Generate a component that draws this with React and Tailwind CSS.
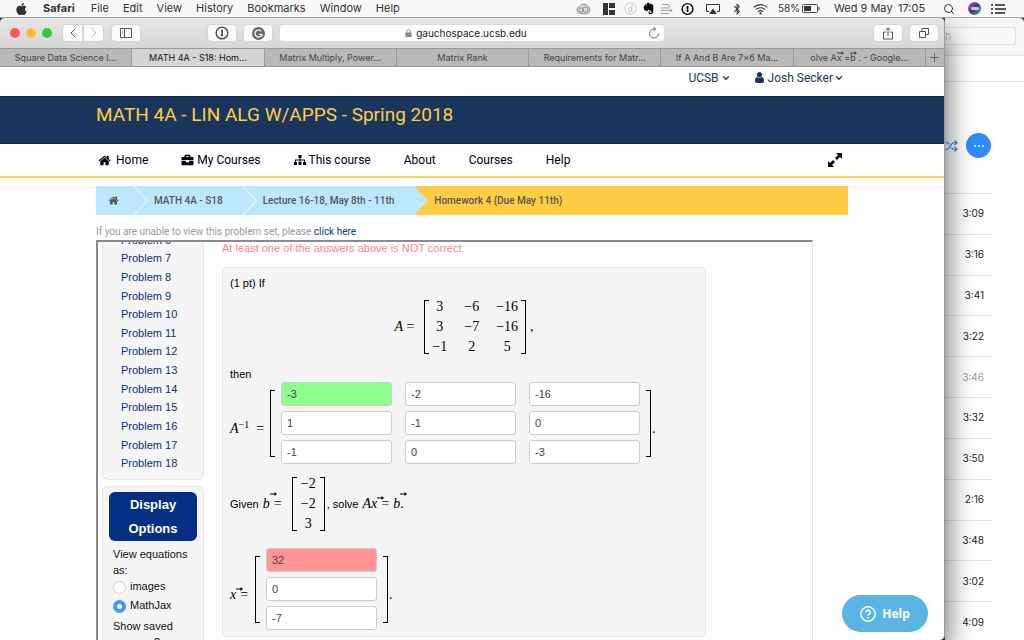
import { FaApple, FaBluetoothB, FaBriefcase, FaEvernote } from "react-icons/fa";
import { ChevronDown, ChevronLeft, ChevronRight, Search, Shuffle } from "lucide-react";

const menus = ["File", "Edit", "View", "History", "Bookmarks", "Window", "Help"];

const problems = [6, 7, 8, 9, 10, 11, 12, 13, 14, 15, 16, 17, 18];

const songs = ["3:09", "3:16", "3:41", "3:22", "3:46", "3:32", "3:50", "2:16", "3:48", "3:02", "4:09"];

const inverse = [
  ["-3", "-2", "-16"],
  ["1", "-1", "0"],
  ["-1", "0", "-3"],
];

const Arrow = ({ className }) => (
  <svg viewBox="0 0 7 4" fill="currentColor" className={`absolute h-1 w-[7px] ${className}`}>
    <path d="M0 1.500h5v1H0zM4.500 0L7 2 4.500 4z" />
  </svg>
);

const TabVec = ({ children }) => (
  <span className="relative">
    {children}
    <Arrow className="-top-px left-0" />
  </span>
);

const tabs = [
  "Square Data Science I...",
  "MATH 4A - S18: Hom...",
  "Matrix Multiply, Power...",
  "Matrix Rank",
  "Requirements for Matr...",
  "If A And B Are 7x6 Ma...",
  <>
    olve A<TabVec>x</TabVec> =<TabVec>b</TabVec> . - Google...
  </>,
];

const HomeIcon = ({ className }) => (
  <svg viewBox="0 0 1792 1792" fill="currentColor" className={className}>
    <path d="M1472 992v480q0 26-19 45t-45 19h-384v-384h-256v384h-384q-26 0-45-19t-19-45v-480q0-1 .5-3t.5-3l575-474 575 474q1 2 1 6zm223-69l-62 74q-8 9-21 11h-3q-13 0-21-7l-692-577-692 577q-12 8-24 7-13-2-21-11l-62-74q-8-10-7-23.5t11-21.5l719-599q32-26 76-26t76 26l244 204v-195q0-14 9-23t23-9h192q14 0 23 9t9 23v408l219 182q10 8 11 21.5t-7 23.5z" />
  </svg>
);

const UserIcon = () => (
  <svg viewBox="256 128 1280 1536" fill="currentColor" className="h-[11px] w-[9px]">
    <path d="M1536 1399q0 109-62.5 187t-150.5 78h-854q-88 0-150.5-78t-62.5-187q0-85 8.5-160.5t31.5-152 58.5-131 94-89 134.5-34.5q131 128 313 128t313-128q76 0 134.5 34.5t94 89 58.5 131 31.5 152 8.5 160.5zm-256-887q0 159-112.5 271.5t-271.5 112.5-271.5-112.5-112.5-271.5 112.5-271.5 271.5-112.5 271.5 112.5 112.5 271.5z" />
  </svg>
);

const SitemapIcon = () => (
  <svg viewBox="0 0 12 12" fill="currentColor" className="h-3 w-3">
    <path d="M4.500 1h3v3H6.500v1.500H11V8h1v3H9V8h1V6.500H6.500V8h1v3h-3V8h1V6.500H2V8h1v3H0V8h1V5.500h4.500V4h-1z" />
  </svg>
);

const ExpandIcon = () => (
  <svg viewBox="0 0 14 14" fill="currentColor" className="h-3.5 w-3.5">
    <path d="M8 0h6v6l-2-2-3 3-2-2 3-3zM6 14H0V8l2 2 3-3 2 2-3 3z" />
  </svg>
);

const KeyholeIcon = ({ className }) => (
  <svg viewBox="0 0 14 14" className={className}>
    <circle cx="7" cy="7" r="5.8" fill="none" stroke="currentColor" strokeWidth="1.5" />
    <path d="M6 3.8h2v2.400l-.5.7.5.6v2.700H6V7.800l.5-.7L6 6.400z" fill="currentColor" />
  </svg>
);

const MenuBar = () => (
  <header className="relative z-20 flex h-[18px] shrink-0 items-center justify-between border-b border-[#a9a3a8] bg-[#f8f8f8] pl-4 pr-[18px] font-['Inter',sans-serif] text-[11px] text-[#333]">
    <nav className="flex items-center gap-4">
      <FaApple className="h-3.5 w-[11px]" />
      <span className="font-bold">Safari</span>
      <div className="flex gap-3.5">
        {menus.map((m) => (
          <span key={m}>{m}</span>
        ))}
      </div>
    </nav>
    <div className="flex items-center">
      <svg viewBox="0 0 16 12" className="mr-3 h-3 w-[15px]" fill="none" stroke="#888">
        <path d="M4.500 11A4 4 0 0 1 4 3.200 5 5 0 0 1 12.500 3 4.200 4.200 0 0 1 11.500 11z" fill="#ddd" />
        <circle cx="5.500" cy="7" r="2.300" />
        <circle cx="10" cy="6.500" r="2.800" />
      </svg>
      <svg viewBox="0 0 12 12" className="mr-[9px] h-3 w-3" fill="#333">
        <path d="M0 0h5v12H0zM6 0h6v5H6zM6 7h6v5H6z" />
      </svg>
      <svg viewBox="0 0 14 14" className="mr-[5px] h-[13px] w-[13px]" fill="none" stroke="#c4c4c4">
        <circle cx="7" cy="7" r="6" />
        <circle cx="6.500" cy="8" r="2" />
        <path d="M8.500 3v7" />
      </svg>
      <FaEvernote className="mr-1.5 h-[13px] w-[13px] text-black" />
      <svg viewBox="0 0 12 12" className="mr-2 h-3 w-3" fill="none" stroke="#999">
        <path d="M1 1.500h6l2 3M0 5h8M0 7.500h11M0 10.500h8M9 5.500l2 2-2 2" />
      </svg>
      <KeyholeIcon className="mr-3 h-[14px] w-[13px] text-black" />
      <svg viewBox="0 0 14 12" className="mr-[13px] h-3 w-3.5">
        <path d="M3 8.500H.5v-7h13v7H11" fill="none" stroke="#333" />
        <path d="M7 5.500l4 5.500H3z" fill="#333" />
      </svg>
      <FaBluetoothB className="mr-3 h-3 w-2" />
      <svg viewBox="0 0 16 12" className="mr-2.5 h-3 w-[15px]" fill="none" stroke="#333" strokeWidth="1.200">
        <path d="M1 4.200a10 10 0 0 1 14 0M3.200 6.600a7 7 0 0 1 9.600 0M5.400 8.900a4 4 0 0 1 5.200 0" />
        <circle cx="8" cy="10.700" r=".6" fill="#333" />
      </svg>
      <span className="w-6 text-[10px]">58%</span>
      <svg viewBox="0 0 18 9" className="mr-3.5 h-[9px] w-[18px]">
        <rect x=".5" y=".5" width="15" height="8" rx="1" fill="none" stroke="#444" />
        <path d="M2 2h7v5H2zM16.500 3h1v3h-1z" fill="#333" />
      </svg>
      <span className="w-16 whitespace-nowrap">Wed 9 May</span>
      <span className="w-[45px]">17:05</span>
      <Search className="mr-[13px] h-3 w-3" />
      <span className="mr-2.5 flex h-[13px] w-[13px] items-center justify-center rounded-full bg-linear-to-br from-[#d84f9b] via-[#3b3a78] to-[#2fb5e0]">
        <span className="h-[3px] w-2 rounded-full bg-white/70" />
      </span>
      <svg viewBox="0 0 15 10" className="h-2.5 w-[15px]" stroke="#222" strokeWidth="1.500">
        <path d="M0 1h2M4 1h10M0 5h2M4 5h11M0 9h2M4 9h10" />
      </svg>
    </div>
  </header>
);

const ToolButton = ({ label, className = "w-[30px] rounded", children }) => (
  <button
    aria-label={label}
    className={`flex h-[18px] items-center justify-center border border-[#d4d4d4] bg-[#fbfbfb] text-[#555] ${className}`}
  >
    {children}
  </button>
);

const Toolbar = () => (
  <div className="grid h-[30px] shrink-0 grid-cols-[279px_1fr_279px] items-center bg-linear-to-b from-[#e6e6e6] to-[#d6d6d6]">
    <div className="flex items-center pl-2.5">
      <div className="mr-2.5 flex gap-1.5">
        <span className="h-2.5 w-2.5 rounded-full bg-[#fc5b57]" />
        <span className="h-2.5 w-2.5 rounded-full bg-[#fdbc40]" />
        <span className="h-2.5 w-2.5 rounded-full bg-[#34c648]" />
      </div>
      <ToolButton label="Back" className="w-[21px] rounded-l">
        <ChevronLeft className="h-4 w-4" strokeWidth={1.5} />
      </ToolButton>
      <ToolButton label="Forward" className="mr-[7px] w-[21px] rounded-r">
        <ChevronRight className="h-4 w-4 text-[#bbb]" strokeWidth={1.5} />
      </ToolButton>
      <ToolButton label="Sidebar">
        <svg viewBox="0 0 12 10" className="h-2.5 w-3" fill="none" stroke="currentColor">
          <path d="M.5.5h11v9H.5zM4.500.5v9M2 3h1M2 5h1" />
        </svg>
      </ToolButton>
      <div className="ml-auto flex gap-1.5 pr-1.5">
        <ToolButton label="1Password">
          <KeyholeIcon className="h-3.5 w-3.5" />
        </ToolButton>
        <ToolButton label="Grammarly">
          <svg viewBox="0 0 14 14" className="h-[13px] w-[13px]">
            <circle cx="7" cy="7" r="7" fill="#666" />
            <path d="M10 4.600A3.800 3.800 0 1 0 10.700 8H7.500M10.700 8v2.200" fill="none" stroke="#fff" strokeWidth="1.300" />
          </svg>
        </ToolButton>
      </div>
    </div>
    <div className="flex h-[18px] items-center rounded border border-[#dadada] bg-[#fdfdfd] px-1 font-['Inter',sans-serif] text-[10px] text-[#222]">
      <span className="flex flex-1 items-center justify-center gap-1">
        <svg viewBox="0 0 8 9" className="h-2 w-[7px]">
          <path d="M2 4V2.500a2 2 0 0 1 4 0V4" fill="none" stroke="#888" />
          <path d="M.5 4h7v5h-7z" fill="#888" />
        </svg>
        gauchospace.ucsb.edu
      </span>
      <button aria-label="Reload" className="text-[#666]">
        <svg viewBox="0 0 12 12" className="h-3 w-3" fill="none" stroke="currentColor">
          <path d="M10.500 6.500a4.500 4.500 0 1 1-4.500-4.500h1.500M5.500 0l2.200 2-2.200 2" />
        </svg>
      </button>
    </div>
    <div className="flex justify-end gap-1.5 pr-[5px]">
      <ToolButton label="Share">
        <svg viewBox="0 0 12 13" className="h-[13px] w-3" fill="none" stroke="currentColor">
          <path d="M4 5H1.500v7h9V5H8M6 9V1M3.800 3L6 .8 8.200 3" />
        </svg>
      </ToolButton>
      <ToolButton label="Show all tabs">
        <svg viewBox="0 0 12 12" className="h-3 w-3" fill="none" stroke="currentColor">
          <path d="M1.500 4.500h6v6h-6zM4 4.500v-3h6.500v6h-3" />
        </svg>
      </ToolButton>
    </div>
  </div>
);

const TabBar = () => (
  <div className="flex h-[19px] shrink-0 border-y border-[#999] bg-[#b9b9b9] font-['Inter',sans-serif] text-[9px] text-[#444]">
    {tabs.map((t, i) => (
      <button
        key={i}
        className={`min-w-0 flex-1 truncate border-r border-[#999] ${i === 1 ? "bg-[#d4d4d4] text-[#111]" : ""}`}
      >
        {t}
      </button>
    ))}
    <button aria-label="New tab" className="flex w-[18px] items-center justify-center">
      <svg viewBox="0 0 9 9" className="h-[9px] w-[9px]" stroke="#666">
        <path d="M4.500 0v9M0 4.500h9" />
      </svg>
    </button>
  </div>
);

const CrumbArrow = ({ last }) => (
  <svg viewBox="0 0 14 29" className={`h-[29px] w-3.5 shrink-0 ${last ? "bg-[#ffcd44]" : ""}`}>
    {last ? (
      <path d="M0 0l14 14.500L0 29z" fill="#bde6ff" />
    ) : (
      <path d="M0 0l13.500 14.500L0 29" fill="none" stroke="#fff" />
    )}
  </svg>
);

const SiteHeader = () => (
  <>
    <div className="flex h-[29px] items-center justify-end gap-6 pb-2 pl-24 pr-[100px] text-xs text-[#1a365d]">
      <button className="flex items-center gap-0.5">
        UCSB <ChevronDown className="h-2.5 w-2.5" strokeWidth={3} />
      </button>
      <button className="flex items-center gap-1">
        <UserIcon />
        <span className="flex items-center gap-px">
          Josh Secker <ChevronDown className="h-2.5 w-2.5" strokeWidth={3} />
        </span>
      </button>
    </div>
    <div className="h-12 border-y border-[#0a2348] bg-[#1a365d] px-24 pt-1.5">
      <h1 className="text-[19px] leading-6 text-[#ffcd44]">MATH 4A - LIN ALG W/APPS - Spring 2018</h1>
    </div>
    <nav className="flex h-[34px] items-center gap-[33px] border-b-2 border-[#ffd35c] pl-[98px] pr-[102px] text-xs text-black">
      <a href="#home" className="flex items-center gap-[5px]">
        <HomeIcon className="h-[13px] w-[13px]" /> Home
      </a>
      <a href="#my" className="flex items-center gap-[3px]">
        <FaBriefcase className="h-3 w-[13px]" /> My Courses
      </a>
      <a href="#course" className="flex items-center gap-[3px]">
        <SitemapIcon /> This course
      </a>
      <a href="#about">About</a>
      <a href="#courses">Courses</a>
      <a href="#help">Help</a>
      <button aria-label="Full screen" className="ml-auto">
        <ExpandIcon />
      </button>
    </nav>
  </>
);

const Breadcrumb = () => (
  <nav className="flex h-[29px] items-center whitespace-nowrap bg-[#bde6ff] text-[10px] font-medium text-[#555]">
    <a href="#home" aria-label="Home" className="flex w-[38px] justify-center pr-1">
      <HomeIcon className="h-[11px] w-[11px]" />
    </a>
    <CrumbArrow />
    <a href="#s18" className="pl-1.5 pr-5">MATH 4A - S18</a>
    <CrumbArrow />
    <a href="#lecture" className="pl-1.5 pr-5">Lecture 16-18, May 8th - 11th</a>
    <CrumbArrow last />
    <span className="flex h-full flex-1 items-center bg-[#ffcd44] pl-1.5">Homework 4 (Due May 11th)</span>
  </nav>
);

const DisplayChoice = ({ label, checked }) => (
  <label className="flex h-[19px] items-start gap-1">
    <input
      type="radio"
      name="display"
      defaultChecked={checked}
      className="mt-[3px] h-[13px] w-[13px] appearance-none rounded-full border border-[#ccc] bg-white checked:border-4 checked:border-[#3f97f7]"
    />
    {label}
  </label>
);

const Sidebar = () => (
  <aside className="w-[102px] shrink-0 text-[11px]">
    <div className="mb-1.5 h-[238px] overflow-hidden rounded-b-md border border-t-0 border-[#e6e6e6] bg-[#f5f5f5]">
      <ul className="-mt-[11px] flex h-[242px] flex-col pl-[18px] text-[#0b2f7d]">
        {problems.map((n) => (
          <li key={n} className="flex flex-1 items-center leading-none">
            <a href={`#problem-${n}`}>Problem {n}</a>
          </li>
        ))}
      </ul>
    </div>
    <div className="rounded-t-md border border-[#e6e6e6] bg-[#f5f5f5] px-1.5 pt-[5px] text-[#111]">
      <button className="w-full rounded-md bg-[#042f82] pt-px text-[13px] font-bold leading-6 text-white">
        Display
        <br />
        Options
      </button>
      <div role="radiogroup" aria-label="View equations as" className="px-1 pt-[5px] leading-4">
        <p>View equations as:</p>
        <DisplayChoice label="images" />
        <DisplayChoice label="MathJax" checked />
        <p className="pt-0.5">Show saved answers?</p>
      </div>
    </div>
  </aside>
);

const Bracket = ({ right, tall }) => (
  <span
    className={`w-[5px] shrink-0 border-y border-black ${right ? "border-r" : "border-l"} ${
      tall ? "h-[67px]" : "h-[54px]"
    }`}
  />
);

// italic letter with the arrow hanging over its right side
const Vec = ({ children, high }) => (
  <span className="relative italic">
    {children}
    <Arrow className={high ? "-top-1 left-full" : "left-full top-0"} />
  </span>
);

const Answer = ({ value, label, color = "bg-white" }) => (
  <input
    aria-label={label}
    defaultValue={value}
    className={`h-6 w-[111px] rounded-[3px] border border-[#ccc] px-[5px] text-[11px] text-[#444] ${color}`}
  />
);

const serif = "font-['Liberation_Serif',serif] text-sm";

const Problem = () => (
  <section className="w-[484px] rounded-sm border border-[#e6e6e6] bg-[#f4f4f4] px-[7px] pb-1.5 pt-[7px] text-[11px] leading-4 text-black">
    <p>(1 pt) If</p>
    <div className={`mt-1.5 flex items-center justify-center ${serif}`}>
      <span className="mr-2.5">
        <i>A</i> =
      </span>
      <Bracket />
      <div className="grid grid-cols-[auto_auto_auto] gap-x-[17px] px-[3px] text-center leading-5">
        <span>3</span>
        <span>−6</span>
        <span>−16</span>
        <span>3</span>
        <span>−7</span>
        <span>−16</span>
        <span>−1</span>
        <span>2</span>
        <span>5</span>
      </div>
      <Bracket right />
      <span className="pl-1">,</span>
    </div>
    <p className="mt-[9px]">then</p>
    <div className="flex items-center">
      <span className={`w-10 shrink-0 whitespace-nowrap pt-3 ${serif}`}>
        <i>A</i>
        <sup className="text-[10px]">−1</sup>
        <span className="pl-[7px]">=</span>
      </span>
      <Bracket tall />
      <div className="mx-1.5 grid grid-cols-3 gap-x-[13px] gap-y-[5px]">
        {inverse.map((row, r) =>
          row.map((v, c) => (
            <Answer
              key={`${r}${c}`}
              value={v}
              label={`Row ${r + 1}, column ${c + 1}`}
              color={r + c === 0 ? "bg-[#8cff8c]" : "bg-white"}
            />
          ))
        )}
      </div>
      <Bracket right tall />
      <span className={`pl-px pt-3 ${serif}`}>.</span>
    </div>
    <div className="mt-2.5 flex items-center">
      <span>Given</span>
      <span className={`w-[33px] pl-1 ${serif}`}>
        <Vec high>b</Vec>
        <span className="pl-1">=</span>
      </span>
      <Bracket />
      <div className={`px-1 text-center ${serif}`}>
        <div className="leading-5">−2</div>
        <div className="leading-5">−2</div>
        <div className="leading-5">3</div>
      </div>
      <Bracket right />
      <span className="pl-0.5">, solve</span>
      <span className={`pl-1 ${serif}`}>
        <i>A</i>
        <Vec>x</Vec>
        <span className="px-1">=</span>
        <Vec high>b</Vec>.
      </span>
    </div>
    <div className="mt-3.5 flex items-center">
      <span className={`w-[25px] pt-3 ${serif}`}>
        <Vec>x</Vec>
        <span className="pl-1">=</span>
      </span>
      <Bracket tall />
      <div className="mx-1.5 flex flex-col gap-[5px]">
        <Answer value="32" label="x row 1" color="bg-[#ff9494]" />
        <Answer value="0" label="x row 2" />
        <Answer value="-7" label="x row 3" />
      </div>
      <Bracket right tall />
      <span className={`pl-px pt-3 ${serif}`}>.</span>
    </div>
  </section>
);

const SafariWindow = () => (
  <main className="relative z-10 flex min-w-0 flex-1 flex-col overflow-hidden rounded-t-[5px] rounded-br-[5px] border-r border-[#999] bg-white font-['Roboto',sans-serif] shadow-[0_14px_30px_rgba(0,0,0,0.65)]">
    <Toolbar />
    <TabBar />
    <SiteHeader />
    <div className="flex min-h-0 flex-1 flex-col px-24 pt-2">
      <Breadcrumb />
      <p className="pt-[9px] text-[10px] leading-4 text-[#999]">
        If you are unable to view this problem set, please{" "}
        <a href="#view" className="text-[#0b3a82]">
          click here
        </a>
      </p>
      <div className="mr-[35px] flex min-h-0 flex-1 gap-[18px] overflow-hidden border-l-2 border-r border-t-2 border-[#8a8a8a] border-r-[#e4e4e4] pl-1 font-['Liberation_Sans',Arial,sans-serif]">
        <Sidebar />
        <div>
          <p className="mb-[13px] text-[11px] leading-3 text-[#ff8383]">
            At least one of the answers above is NOT correct.
          </p>
          <Problem />
        </div>
      </div>
    </div>
    <button className="absolute bottom-2 right-4 flex h-[37px] w-[86px] items-center justify-center gap-1.5 rounded-full bg-[#5bb5e4] font-['Noto_Sans',sans-serif] text-xs font-bold text-white">
      <svg viewBox="0 0 16 16" className="h-4 w-4" fill="none" stroke="currentColor" strokeWidth="1.400">
        <circle cx="8" cy="8" r="7.200" />
        <path d="M5.800 6.400a2.200 2.200 0 1 1 3.200 2q-1 .5-1 1.400M8 11v1.400" />
      </svg>
      Help
    </button>
  </main>
);

const MusicWindow = () => (
  <aside className="w-[79px] shrink-0 overflow-hidden rounded-tr-[5px] bg-white font-['Inter',sans-serif] text-[10px] text-[#222]">
    <div className="h-[37px] bg-[#f6f6f6] pr-2 pt-[9px]">
      <input
        aria-label="Search"
        placeholder="h"
        className="h-[18px] w-full rounded-r border border-l-0 border-[#ddd] bg-[#f9f9f9] text-[11px] placeholder:text-[#bbb]"
      />
    </div>
    <div className="h-[27px] border-y border-[#e4e4e4] bg-white" />
    <div className="flex h-[111px] items-center gap-2 pt-4">
      <Shuffle className="h-3.5 w-[13px] text-[#2a7de1]" />
      <button aria-label="More" className="flex h-[25px] w-[25px] items-center justify-center gap-0.5 rounded-full bg-[#2f8bf8]">
        <span className="h-0.5 w-0.5 rounded-full bg-white" />
        <span className="h-0.5 w-0.5 rounded-full bg-white" />
        <span className="h-0.5 w-0.5 rounded-full bg-white" />
      </button>
    </div>
    <ul className="flex h-[449px] w-[47px] flex-col">
      {songs.map((s) => (
        <li
          key={s}
          className={`flex flex-1 items-center justify-end border-t border-[#e2e2e2] pr-2 ${s === "3:46" ? "text-[#999]" : ""}`}
        >
          {s}
        </li>
      ))}
    </ul>
  </aside>
);

const App = () => {
  return (
    <div className="flex h-screen flex-col overflow-hidden bg-[#3a3f55]">
      <MenuBar />
      <div className="flex min-h-0 flex-1">
        <SafariWindow />
        <MusicWindow />
      </div>
    </div>
  );
};

export default App;
